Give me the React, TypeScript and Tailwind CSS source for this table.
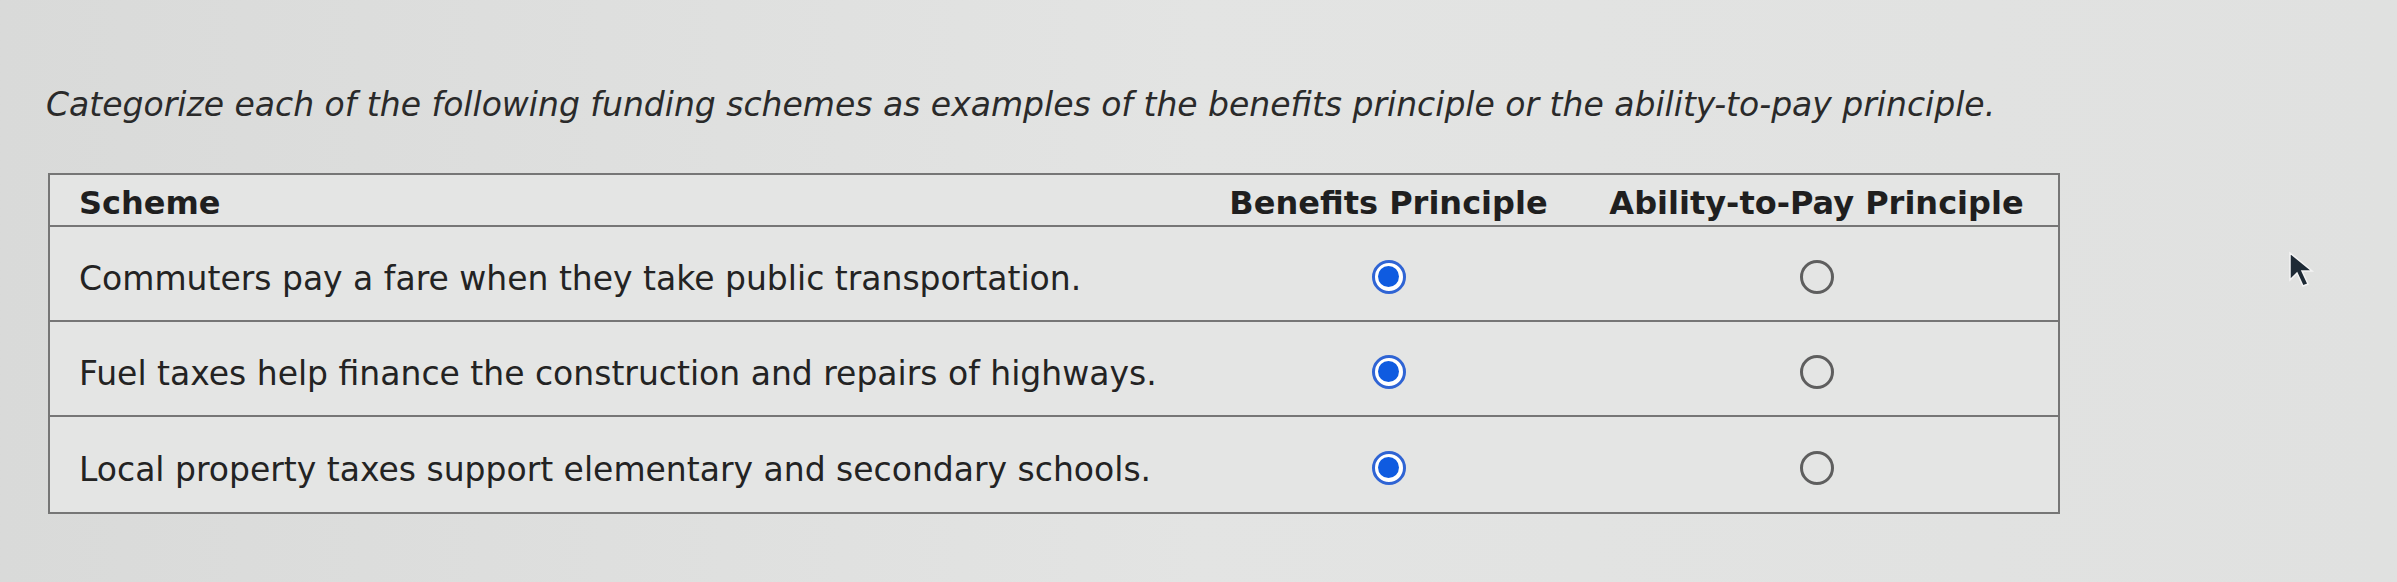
import React from "react";

const rows = [
  "Commuters pay a fare when they take public transportation.",
  "Fuel taxes help finance the construction and repairs of highways.",
  "Local property taxes support elementary and secondary schools.",
];

function RadioOn() {
  return (
    <div className="w-[34px] h-[34px] rounded-full border-[3px] border-[#2f64d4] bg-white flex items-center justify-center">
      <div className="w-[21px] h-[21px] rounded-full bg-[#0f5be0]" />
    </div>
  );
}

function RadioOff() {
  return <div className="w-[34px] h-[34px] rounded-full border-[3px] border-[#5e5e5e] bg-transparent" />;
}

export default function App() {
  return (
    <div
      className="relative w-[2397px] h-[582px] overflow-hidden bg-gradient-to-r from-[#d9dad9] via-[#e3e4e3] to-[#e0e1e0] text-[#1f1f1f]"
      style={{ fontFamily: '"DejaVu Sans", Verdana, sans-serif' }}
    >
      <div className="pl-[46px] pt-[85px]">
        <p className="italic text-[33px] leading-[40px] text-[#2a2a2a] whitespace-nowrap">
          Categorize each of the following funding schemes as examples of the benefits principle or the ability-to-pay principle.
        </p>
        <div className="mt-[48px] ml-[2px] w-[2012px] border-[2px] border-[#767676] bg-[#e4e5e4]">
          <div className="grid grid-cols-[1152px_373px_1fr] h-[52px] pt-[4px] items-center border-b-[2px] border-[#767676]">
            <div className="pl-[29px] font-bold text-[32px]">Scheme</div>
            <div className="text-center font-bold text-[32px] whitespace-nowrap">Benefits Principle</div>
            <div className="text-center font-bold text-[32px] whitespace-nowrap">Ability-to-Pay Principle</div>
          </div>
          {rows.map((r, i) => (
            <div
              key={i}
              className={`grid grid-cols-[1152px_373px_1fr] h-[95px] pt-[6px] items-center ${
                i < rows.length - 1 ? "border-b-[2px] border-[#767676]" : ""
              }`}
            >
              <div className="pl-[29px] pt-[4px] text-[33px] text-[#232323] whitespace-nowrap">{r}</div>
              <div className="flex justify-center">
                <RadioOn />
              </div>
              <div className="flex justify-center">
                <RadioOff />
              </div>
            </div>
          ))}
        </div>
      </div>
      <svg className="absolute left-[2286px] top-[250px]" width="36" height="44" viewBox="0 0 36 44">
        <path d="M4 3 L4 30 L11 23 L17 36 L22 34 L16 21 L26 21 Z" fill="#1e2a35" stroke="#f4f4f4" strokeWidth="1.5" />
      </svg>
    </div>
  );
}
